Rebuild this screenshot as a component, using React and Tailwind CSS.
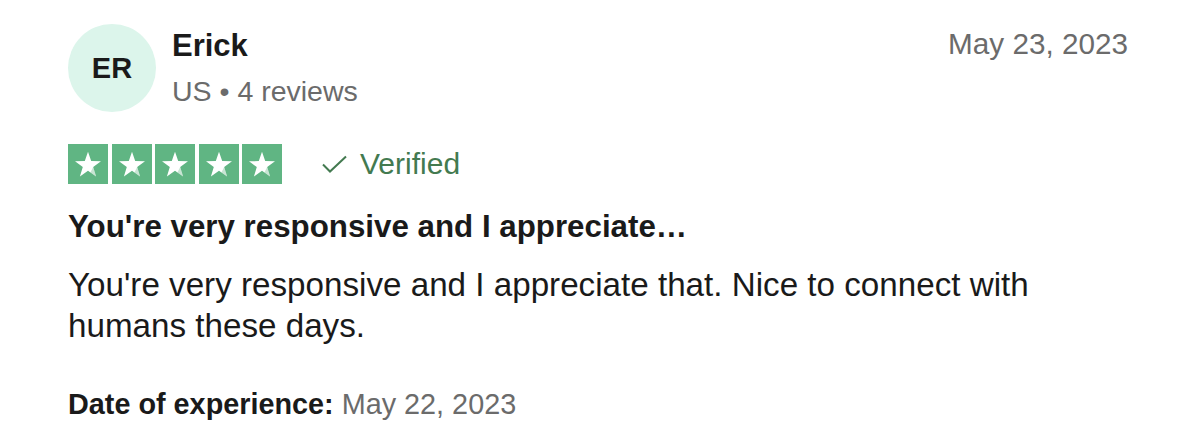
export default function App() {
  const stars = [0, 1, 2, 3, 4];
  return (
    <main
      className="w-[1188px] h-[443px] bg-white pl-[68px] pr-[60px] pt-[24px] text-[#1a1a1a]"
      style={{ fontFamily: '"Liberation Sans", Arial, sans-serif' }}
    >
      {/* header */}
      <header className="flex justify-between items-start">
        <div className="flex items-start gap-[16px]">
          <div className="w-[88px] h-[88px] rounded-full bg-[#dcf5eb] flex items-center justify-center">
            <span className="text-[29px] font-bold leading-none">ER</span>
          </div>
          <div>
            <h3 className="text-[31px] font-bold leading-[43px]">Erick</h3>
            <p className="text-[28.5px] leading-[48px] text-[#6b6b6b]">
              US • 4 reviews
            </p>
          </div>
        </div>
        <p className="text-[29.7px] leading-[40px] text-[#6b6b6b]">
          May 23, 2023
        </p>
      </header>

      {/* rating */}
      <div className="mt-[29px] flex items-center h-[40px]">
        <div className="flex gap-[3.5px]">
          {stars.map((i) => (
            <div key={i} className="w-[40px] h-[40px] bg-[#60b583]">
              <svg viewBox="0 0 40 40" width="40" height="40">
                <polygon
                  fill="#fff"
                  points="20,7.7 23.2,17.1 33,17.2 25.2,23.1 28.1,32.5 20,26.8 11.9,32.5 14.8,23.1 7,17.2 16.8,17.1"
                />
                <polygon fill="#60b583" opacity="0.35" points="25.2,23.1 28.1,32.5 22.4,28.5" />
              </svg>
            </div>
          ))}
        </div>
        <svg
          className="ml-[40px]"
          width="26"
          height="18"
          viewBox="0 0 26 18"
          fill="none"
          stroke="#437a50"
          strokeWidth="2"
        >
          <path d="M1 9.5 L8 16.5 L24 1.5" />
        </svg>
        <span className="ml-[12px] text-[30px] leading-[36px] text-[#437a50]">
          Verified
        </span>
      </div>

      {/* review */}
      <h2 className="mt-[23px] text-[31.3px] font-bold leading-[40px]">
        You're very responsive and I appreciate…
      </h2>
      <p className="mt-[17px] text-[33.2px] leading-[41px]">
        You're very responsive and I appreciate that. Nice to connect with
        humans these days.
      </p>

      <p className="mt-[40px] text-[28.8px] leading-[36px]">
        <span className="font-bold">Date of experience:</span>{" "}
        <span className="text-[#6b6b6b]">May 22, 2023</span>
      </p>
    </main>
  );
}
